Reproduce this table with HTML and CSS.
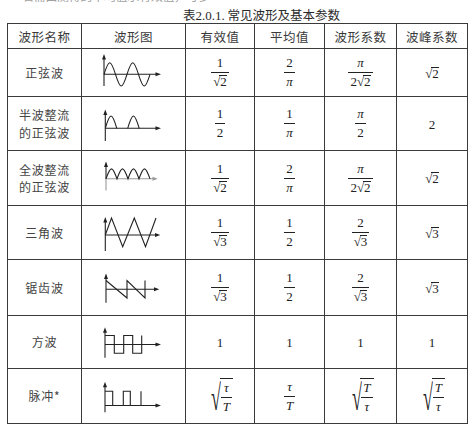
FILE: index.html
```html
<!DOCTYPE html>
<html lang="zh">
<head>
<meta charset="utf-8">
<title>常见波形及基本参数</title>
<link rel="stylesheet" href="styles.css">
</head>
<body>
<div class="cut"><span>若需由测得的平均值求有效值，可参</span></div>
<div class="title">表<span class="tn">2.0.1.</span> 常见波形及基本参数</div>
<table class="wave">
  <colgroup>
    <col class="c1"><col class="c2"><col class="c3"><col class="c4"><col class="c5"><col class="c6">
  </colgroup>
  <thead>
    <tr class="rh"><th>波形名称</th><th>波形图</th><th>有效值</th><th>平均值</th><th>波形系数</th><th>波峰系数</th></tr>
  </thead>
  <tbody>
    <tr class="r1">
      <td class="name">正弦波</td>
      <td class="fig">
        <svg class="wv" width="80" height="46" viewBox="0 0 80 46">
          <line x1="9" y1="8" x2="9" y2="36"/><polygon points="9,4 7,9.5 11,9.5"/>
          <line x1="9" y1="24.3" x2="62" y2="24.3"/><polygon points="66,24.3 60.5,22.3 60.5,26.3"/>
          <path d="M9,24.3 c4.88,-15.5 6.62,-15.5 11.5,0 c4.88,15.5 6.62,15.5 11.5,0 c4.88,-15.5 6.62,-15.5 11.5,0 c4.88,15.5 6.62,15.5 11.5,0"/>
        </svg>
      </td>
      <td><span class="frac"><span class="num">1</span><span class="den"><span class="sq">√<span class="rad">2</span></span></span></span></td>
      <td><span class="frac"><span class="num">2</span><span class="den"><i>π</i></span></span></td>
      <td><span class="frac"><span class="num"><i>π</i></span><span class="den">2<span class="sq">√<span class="rad">2</span></span></span></span></td>
      <td><span class="sq">√<span class="rad">2</span></span></td>
    </tr>
    <tr class="r2">
      <td class="name">半波整流<br>的正弦波</td>
      <td class="fig">
        <svg class="wv" width="80" height="46" viewBox="0 0 80 46">
          <line x1="10.3" y1="12" x2="10.3" y2="40"/><polygon points="10.3,8.5 8.3,14 12.3,14"/>
          <line x1="10.3" y1="27.3" x2="62" y2="27.3"/><polygon points="66,27.3 60.5,25.3 60.5,29.3"/>
          <path d="M10.3,27.3 c4.88,-16.4 6.62,-16.4 11.5,0 M32.7,27.3 c4.88,-16.4 6.62,-16.4 11.5,0"/>
        </svg>
      </td>
      <td><span class="frac"><span class="num">1</span><span class="den">2</span></span></td>
      <td><span class="frac"><span class="num">1</span><span class="den"><i>π</i></span></span></td>
      <td><span class="frac"><span class="num"><i>π</i></span><span class="den">2</span></span></td>
      <td><span class="plain">2</span></td>
    </tr>
    <tr class="r3">
      <td class="name">全波整流<br>的正弦波</td>
      <td class="fig">
        <svg class="wv" width="80" height="46" viewBox="0 0 80 46">
          <line x1="11" y1="10" x2="11" y2="24"/><polygon points="11,6.5 9,12 13,12"/>
          <line class="faint" x1="11" y1="24" x2="11" y2="35.5"/>
          <line class="faint" x1="11" y1="23.8" x2="59" y2="23.8"/><polygon class="faintf" points="62.7,23.8 57.5,21.8 57.5,25.8"/>
          <path d="M11,23.8 c4.67,-13.3 6.33,-13.3 11,0 c4.67,-13.3 6.33,-13.3 11,0 c4.67,-13.3 6.33,-13.3 11,0 c4.67,-13.3 6.33,-13.3 11,0"/>
        </svg>
      </td>
      <td><span class="frac"><span class="num">1</span><span class="den"><span class="sq">√<span class="rad">2</span></span></span></span></td>
      <td><span class="frac"><span class="num">2</span><span class="den"><i>π</i></span></span></td>
      <td><span class="frac"><span class="num"><i>π</i></span><span class="den">2<span class="sq">√<span class="rad">2</span></span></span></span></td>
      <td><span class="sq">√<span class="rad">2</span></span></td>
    </tr>
    <tr class="r4">
      <td class="name">三角波</td>
      <td class="fig">
        <svg class="wv" width="80" height="46" viewBox="0 0 80 46">
          <line x1="10.3" y1="11" x2="10.3" y2="41"/><polygon points="10.3,7 8.3,12.5 12.3,12.5"/>
          <line x1="10.3" y1="25" x2="61.5" y2="25"/><polygon points="65.3,25 60,23 60,27"/>
          <polyline points="10.3,25 16.5,8 27.7,36.7 39.3,8 50.5,36.7 61,8"/>
        </svg>
      </td>
      <td><span class="frac"><span class="num">1</span><span class="den"><span class="sq">√<span class="rad">3</span></span></span></span></td>
      <td><span class="frac"><span class="num">1</span><span class="den">2</span></span></td>
      <td><span class="frac"><span class="num">2</span><span class="den"><span class="sq">√<span class="rad">3</span></span></span></span></td>
      <td><span class="sq">√<span class="rad">3</span></span></td>
    </tr>
    <tr class="r5">
      <td class="name">锯齿波</td>
      <td class="fig">
        <svg class="wv" width="80" height="46" viewBox="0 0 80 46">
          <line x1="11" y1="12" x2="11" y2="37.7"/><polygon points="11,8.5 9,14 13,14"/>
          <line x1="11" y1="24.3" x2="60.5" y2="24.3"/><polygon points="64.3,24.3 59,22.3 59,26.3"/>
          <polyline points="11,15.5 32,33 32,15.5 50,33 50,15.5"/>
        </svg>
      </td>
      <td><span class="frac"><span class="num">1</span><span class="den"><span class="sq">√<span class="rad">3</span></span></span></span></td>
      <td><span class="frac"><span class="num">1</span><span class="den">2</span></span></td>
      <td><span class="frac"><span class="num">2</span><span class="den"><span class="sq">√<span class="rad">3</span></span></span></span></td>
      <td><span class="sq">√<span class="rad">3</span></span></td>
    </tr>
    <tr class="r6">
      <td class="name">方波</td>
      <td class="fig">
        <svg class="wv" width="80" height="46" viewBox="0 0 80 46">
          <line x1="10" y1="12" x2="10" y2="38.8"/><polygon points="10,8.3 8,13.8 12,13.8"/>
          <line x1="10" y1="25.5" x2="62" y2="25.5"/><polygon points="66,25.5 60.5,23.5 60.5,27.5"/>
          <polyline points="10,16.5 19.3,16.5 19.3,34.2 28.7,34.2 28.7,16.5 37.7,16.5 37.7,34.2 46.7,34.2 46.7,16.5"/>
        </svg>
      </td>
      <td><span class="plain">1</span></td>
      <td><span class="plain">1</span></td>
      <td><span class="plain">1</span></td>
      <td><span class="plain">1</span></td>
    </tr>
    <tr class="r7">
      <td class="name">脉冲*</td>
      <td class="fig">
        <svg class="wv" width="80" height="46" viewBox="0 0 80 46">
          <line x1="10" y1="12" x2="10" y2="39.2"/><polygon points="10,8.7 8,14.2 12,14.2"/>
          <line x1="10" y1="32.5" x2="62" y2="32.5"/><polygon points="66,32.5 60.5,30.5 60.5,34.5"/>
          <polyline points="10,18.2 17.7,18.2 17.7,32.5"/>
          <polyline points="28.3,32.5 28.3,18.2 35.3,18.2 35.3,32.5"/>
          <line x1="46" y1="18.2" x2="46" y2="32.5"/>
        </svg>
      </td>
      <td><span class="bsq"><span class="bsign">√</span><span class="brad"><span class="frac"><span class="num"><i>τ</i></span><span class="den"><i>T</i></span></span></span></span></td>
      <td><span class="frac"><span class="num"><i>τ</i></span><span class="den"><i>T</i></span></span></td>
      <td><span class="bsq"><span class="bsign">√</span><span class="brad"><span class="frac"><span class="num"><i>T</i></span><span class="den"><i>τ</i></span></span></span></span></td>
      <td><span class="bsq"><span class="bsign">√</span><span class="brad"><span class="frac"><span class="num"><i>T</i></span><span class="den"><i>τ</i></span></span></span></span></td>
    </tr>
  </tbody>
</table>
</body>
</html>
```
FILE: styles.css
```css
html, body {
  margin: 0;
  padding: 0;
  background: #ffffff;
}
body {
  width: 474px;
  height: 428px;
  overflow: hidden;
  font-family: "Liberation Serif", "Noto Sans CJK SC", serif;
  color: #222;
}
.cut {
  height: 6px;
  overflow: hidden;
  padding-left: 22px;
}
.cut span {
  display: block;
  height: 14px;
  margin-top: -11px;
  font-family: "Noto Sans CJK SC", sans-serif;
  font-size: 12px;
  line-height: 14px;
  color: #a0a0a0;
  letter-spacing: -0.3px;
  white-space: nowrap;
}
.title {
  height: 17px;
  line-height: 17px;
  padding-left: 183px;
  font-family: "Noto Sans CJK SC", sans-serif;
  font-size: 12.5px;
  color: #2a2a2a;
  white-space: nowrap;
}
.title .tn {
  font-family: "Liberation Serif", serif;
  font-size: 13px;
}
.wave {
  margin-left: 7px;
  width: 460px;
  table-layout: fixed;
  border-collapse: collapse;
}
.c1 { width: 74px; }
.c2 { width: 104px; }
.c3 { width: 69px; }
.c4 { width: 70px; }
.c5 { width: 72px; }
.c6 { width: 71px; }
.wave th, .wave td {
  border: 1px solid #3a3a3a;
  padding: 0;
  text-align: center;
  vertical-align: middle;
}
.wave th {
  font-family: "Noto Sans CJK SC", sans-serif;
  font-weight: 400;
  font-size: 12.5px;
  color: #3a3a3a;
  letter-spacing: 0.5px;
}
.rh { height: 25px; }
.r1 { height: 48px; }
.r2 { height: 54px; }
.r3 { height: 55px; }
.r4 { height: 54px; }
.r5 { height: 56px; }
.r6 { height: 53px; }
.r7 { height: 55px; }
.name {
  font-family: "Noto Sans CJK SC", sans-serif;
  font-size: 12px;
  line-height: 17.5px;
  color: #444;
  letter-spacing: 0.8px;
}
.fig { text-align: left; }
.wv {
  display: block;
  margin-left: 13px;
  fill: none;
  stroke: #222;
  stroke-width: 1.1;
}
.wv polygon { fill: #222; stroke: none; }
.wv .faint { stroke: #999; }
.wv .faintf { fill: #999; }
.frac {
  display: inline-flex;
  flex-direction: column;
  align-items: center;
  vertical-align: middle;
  font-size: 13px;
  line-height: 14px;
}
.frac .num {
  align-self: stretch;
  padding: 0 2px 2px;
  border-bottom: 1px solid #222;
}
.frac .den {
  padding: 2px 2px 0;
  white-space: nowrap;
}
.plain {
  font-size: 13px;
}
i {
  font-style: italic;
}
.sq {
  white-space: nowrap;
  font-size: 13px;
}
.rad {
  display: inline-block;
  border-top: 1px solid #222;
  line-height: 12px;
  padding-left: 1px;
  margin-left: -1px;
}
.bsq {
  display: inline-flex;
  align-items: flex-end;
  vertical-align: middle;
}
.bsign {
  display: inline-block;
  font-size: 36px;
  line-height: 32px;
  transform: scaleX(0.5);
  transform-origin: right bottom;
  margin-left: -6px;
  margin-right: -1px;
}
.brad {
  border-top: 1px solid #222;
  padding: 2px 1px 0;
}
```
